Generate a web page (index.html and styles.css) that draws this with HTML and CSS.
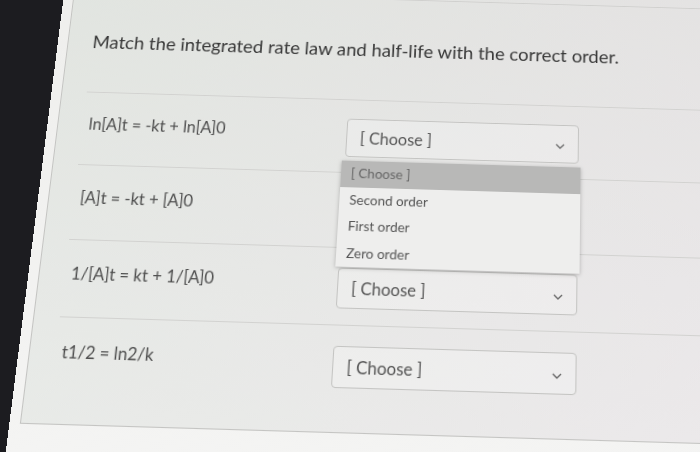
FILE: index.html
```html
<!DOCTYPE html>
<html lang="en">
<head>
    <meta charset="UTF-8">
    <meta name="viewport" content="width=device-width, initial-scale=1.0">
    <title>Quiz - Matching</title>
    <link rel="stylesheet" href="styles.css">
</head>
<body>
    <div class="photo">
        <div class="screen">
            <div class="quiz">
                <div class="quiz-top"></div>
                <p class="question-text">Match the integrated rate law and half-life with the correct order.</p>
                <div class="answers">
                    <div class="answer">
                        <span class="answer-label">ln[A]t = -kt + ln[A]0</span>
                        <div class="picker">
                            <div class="select">
                                <span>[ Choose ]</span>
                                <svg class="chevron" width="10" height="6" viewBox="0 0 10 6"><polyline points="1,1 5,5 9,1" fill="none" stroke="#6b6b6b" stroke-width="1.4"/></svg>
                            </div>
                            <ul class="options">
                                <li class="selected">[ Choose ]</li>
                                <li>Second order</li>
                                <li>First order</li>
                                <li>Zero order</li>
                            </ul>
                        </div>
                    </div>
                    <div class="answer">
                        <span class="answer-label">[A]t = -kt + [A]0</span>
                        <div class="picker">
                            <div class="select">
                                <span>[ Choose ]</span>
                                <svg class="chevron" width="10" height="6" viewBox="0 0 10 6"><polyline points="1,1 5,5 9,1" fill="none" stroke="#6b6b6b" stroke-width="1.4"/></svg>
                            </div>
                        </div>
                    </div>
                    <div class="answer">
                        <span class="answer-label">1/[A]t = kt + 1/[A]0</span>
                        <div class="picker">
                            <div class="select">
                                <span>[ Choose ]</span>
                                <svg class="chevron" width="10" height="6" viewBox="0 0 10 6"><polyline points="1,1 5,5 9,1" fill="none" stroke="#6b6b6b" stroke-width="1.4"/></svg>
                            </div>
                        </div>
                    </div>
                    <div class="answer">
                        <span class="answer-label">t1/2 = ln2/k</span>
                        <div class="picker">
                            <div class="select">
                                <span>[ Choose ]</span>
                                <svg class="chevron" width="10" height="6" viewBox="0 0 10 6"><polyline points="1,1 5,5 9,1" fill="none" stroke="#6b6b6b" stroke-width="1.4"/></svg>
                            </div>
                        </div>
                    </div>
                </div>
            </div>
        </div>
    </div>
</body>
</html>
```

FILE: styles.css
```css
html, body {
    margin: 0;
    padding: 0;
}

body {
    background-color: #1c1c20;
    font-family: Lato, "Liberation Sans", sans-serif;
}

/* camera frame: dark monitor bezel on the left */
.photo {
    display: flow-root;
    width: 700px;
    height: 452px;
    box-sizing: border-box;
    padding-left: 36px;
    overflow: hidden;
    background-color: #1c1c20;
}

/* the photographed monitor: tilted back a little and turned */
.screen {
    width: 800px;
    height: 620px;
    margin-top: -60px;
    padding-left: 10px;
    box-sizing: border-box;
    background: linear-gradient(#eeeeec, #f5f5f4);
    transform-origin: 451px 286px;
    transform: perspective(1200px) rotate(1.7deg) rotateX(14.5deg);
}

.quiz {
    height: 495px;
    box-sizing: border-box;
    padding-left: 25px;
    border-left: 1px solid #c4c4c2;
    border-bottom: 1px solid #c4c4c2;
    background:
        linear-gradient(100deg, rgba(220, 228, 220, 0.35), rgba(232, 222, 230, 0.35)),
        linear-gradient(#e3e4e1, #ebebea 70%, #eeeeed);
}

.quiz-top {
    height: 43px;
    margin-left: 210px;
    border-bottom: 1px solid #d0d0ce;
}

.question-text {
    margin: 45px 0 43px;
    font-size: 19.2px;
    line-height: 24px;
    color: #383838;
}

.answer {
    display: flex;
    height: 78px;
    box-sizing: border-box;
    border-top: 1px solid #d2d2d0;
}

.answer-label {
    width: 263px;
    padding: 25px 0 0 6px;
    font-size: 16.5px;
    line-height: 18px;
    color: #4e4e4e;
}

.picker {
    position: relative;
    align-self: flex-start;
    width: 237px;
    margin-top: 20px;
}

.select {
    display: flex;
    align-items: center;
    justify-content: space-between;
    height: 41px;
    box-sizing: border-box;
    padding: 0 13px;
    border: 1px solid #c4c4c2;
    border-radius: 4px;
    background-color: rgba(255, 255, 255, 0.22);
    font-size: 16.5px;
    color: #555;
}

.chevron {
    margin-top: 4px;
}

/* open dropdown of the first select */
.options {
    position: absolute;
    top: calc(100% + 4px);
    left: -3px;
    z-index: 2;
    width: 242px;
    margin: 0;
    padding: 0;
    list-style: none;
    background-color: #eeeeed;
    box-shadow: 0 1px 4px rgba(0, 0, 0, 0.25);
    font-size: 13.5px;
    color: #555;
}

.options li {
    height: 27.5px;
    line-height: 27.5px;
    padding-left: 10px;
}

.options li.selected {
    background-color: #b8b8b7;
    color: #666;
}
```
